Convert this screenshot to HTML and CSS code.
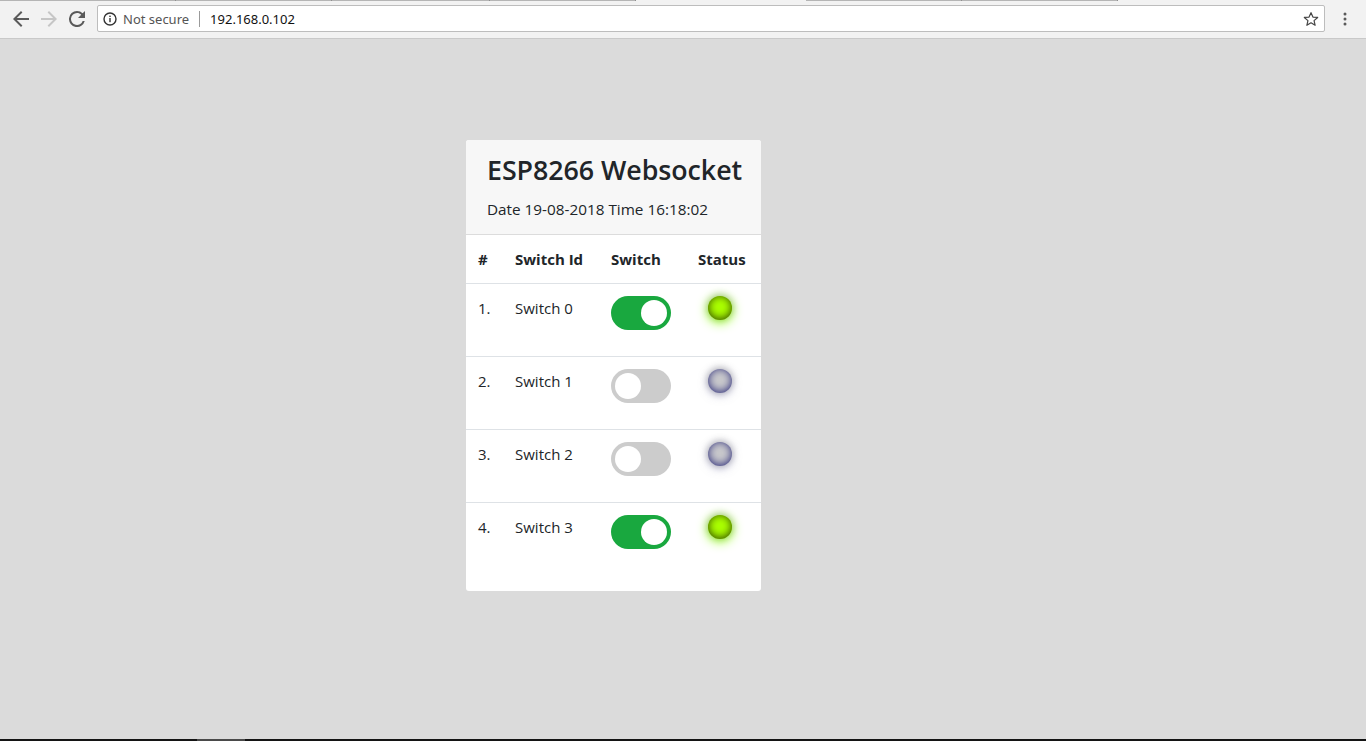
FILE: index.html
```html
<!DOCTYPE html>
<html>
<head>
<meta charset="utf-8">
<title>ESP8266 Websocket</title>
<link rel="stylesheet" href="styles.css">
</head>
<body>
<div class="window">
  <div class="chrome">
    <div class="tabstrip">
      <span class="tabline t1"></span><span class="tabline t2"></span><span class="tabline t3"></span><span class="tabline t4"></span>
      <span class="tabgap"></span>
      <span class="tabline t5"></span><span class="tabline t6"></span>
    </div>
    <div class="toolbar">
      <span class="navbtn">
        <svg width="16" height="16" viewBox="0 0 16 16"><path d="M16 7H3.83l5.59-5.59L8 0 0 8l8 8 1.41-1.41L3.83 9H16z" fill="#5a5a5a"/></svg>
      </span>
      <span class="navbtn">
        <svg width="16" height="16" viewBox="0 0 16 16"><path d="M0 7h12.17L6.58 1.41 8 0l8 8-8 8-1.41-1.41L12.17 9H0z" fill="#c6c6c6"/></svg>
      </span>
      <span class="navbtn">
        <svg width="16" height="16" viewBox="0 0 16 16"><path d="M13.65 2.35A7.95 7.95 0 0 0 8 0a8 8 0 1 0 7.74 10h-2.08A6 6 0 1 1 8 2c1.66 0 3.14.69 4.22 1.78L9 7h7V0l-2.35 2.35z" fill="#5a5a5a"/></svg>
      </span>
      <div class="omnibox">
        <svg class="info" width="14" height="14" viewBox="0 0 14 14"><circle cx="7" cy="7" r="6" fill="none" stroke="#333" stroke-width="1.4"/><rect x="6.3" y="6" width="1.4" height="4.2" fill="#333"/><rect x="6.3" y="3.6" width="1.4" height="1.4" fill="#333"/></svg>
        <span class="notsecure">Not secure</span>
        <span class="sep"></span>
        <span class="url">192.168.0.102</span>
        <span class="grow"></span>
        <svg class="star" width="16" height="16" viewBox="0 0 24 24"><path d="M12 2.5l2.9 6.6 7.1.6-5.4 4.7 1.6 7-6.2-3.7-6.2 3.7 1.6-7L2 9.7l7.1-.6z" fill="none" stroke="#444" stroke-width="1.8" stroke-linejoin="round"/></svg>
      </div>
      <span class="menu">
        <svg width="4" height="16" viewBox="0 0 4 16"><circle cx="2" cy="3" r="1.5" fill="#5a5a5a"/><circle cx="2" cy="8" r="1.5" fill="#5a5a5a"/><circle cx="2" cy="13" r="1.5" fill="#5a5a5a"/></svg>
      </span>
    </div>
  </div>
  <div class="viewport">
    <div class="card">
      <div class="card-header">
        <h3 class="title">ESP8266 Websocket</h3>
        <p class="datetime">Date 19-08-2018 Time 16:18:02</p>
      </div>
      <table class="table">
        <thead>
          <tr><th class="c1">#</th><th class="c2">Switch Id</th><th class="c3">Switch</th><th class="c4">Status</th></tr>
        </thead>
        <tbody>
          <tr><td>1.</td><td>Switch 0</td><td><span class="toggle on"><span class="knob"></span></span></td><td><span class="led led-on"></span></td></tr>
          <tr><td>2.</td><td>Switch 1</td><td><span class="toggle"><span class="knob"></span></span></td><td><span class="led led-off"></span></td></tr>
          <tr><td>3.</td><td>Switch 2</td><td><span class="toggle"><span class="knob"></span></span></td><td><span class="led led-off"></span></td></tr>
          <tr><td>4.</td><td>Switch 3</td><td><span class="toggle on"><span class="knob"></span></span></td><td><span class="led led-on"></span></td></tr>
        </tbody>
      </table>
    </div>
  </div>
  <div class="taskbar"><span class="taskseg"></span></div>
</div>
</body>
</html>
```

FILE: styles.css
```css
html, body {
  margin: 0;
  padding: 0;
  height: 100%;
}
body {
  font-family: "Open Sans", "Noto Sans", sans-serif;
  color: #212529;
  background: #dbdbdb;
}
.window {
  display: flex;
  flex-direction: column;
  height: 741px;
  overflow: hidden;
}
.chrome {
  height: 38px;
  background: #f2f2f2;
  border-bottom: 1px solid #c9c9c9;
  display: flex;
  flex-direction: column;
  flex: none;
}
.tabstrip {
  height: 2px;
  display: flex;
  flex: none;
}
.tabline {
  height: 1px;
  background: #b5b5b5;
  border-right: 1px solid #8e8e8e;
}
.t1 { width: 175px; }
.t2 { width: 155px; }
.t3 { width: 157px; }
.t4 { width: 145px; }
.tabgap { width: 170px; }
.t5 { width: 155px; }
.t6 { width: 155px; }
.toolbar {
  flex: 1;
  display: flex;
  align-items: center;
  padding: 0 0 0 12px;
  margin-top: 2px;
  margin-bottom: 5px;
}
.navbtn {
  width: 28px;
  height: 24px;
  display: flex;
  align-items: center;
  justify-content: flex-start;
  flex: none;
}
.navbtn:first-child {
  padding-left: 1px;
}
.omnibox {
  width: 1228px;
  height: 27px;
  box-sizing: border-box;
  flex: none;
  background: #fff;
  border: 1px solid #bdbdbd;
  border-radius: 2px;
  display: flex;
  align-items: center;
  padding: 0 5px 0 5px;
  font-family: "Noto Sans", "Open Sans", sans-serif;
  font-size: 13px;
}
.info { flex: none; }
.notsecure {
  margin-left: 6px;
  color: #555;
}
.sep {
  width: 1px;
  height: 16px;
  background: #9a9a9a;
  margin: 0 10px 0 10px;
}
.url {
  color: #111;
}
.grow { flex: 1; }
.star { flex: none; }
.menu {
  margin-left: 18px;
  display: flex;
  align-items: center;
}
.viewport {
  flex: 1;
  background: #dbdbdb;
  padding-top: 101px;
  padding-left: 466px;
}
.taskbar {
  height: 2px;
  background: #141414;
  flex: none;
  padding-left: 197px;
}
.taskseg {
  display: block;
  width: 48px;
  height: 2px;
  background: #4a4a4a;
}
.card {
  width: 295px;
  background: #fff;
  border-radius: 3px;
  overflow: hidden;
}
.card-header {
  background: #f7f7f7;
  border-bottom: 1px solid #dcdcdc;
  padding: 13px 10px 13px 21px;
}
.title {
  margin: 0;
  font-size: 26.8px;
  font-weight: 600;
  line-height: 34px;
  letter-spacing: -0.05px;
  white-space: nowrap;
}
.datetime {
  margin: 10px 0 0 0;
  font-size: 15.3px;
  line-height: 24px;
}
.table {
  width: 100%;
  border-collapse: collapse;
  margin-bottom: 16px;
  font-size: 15px;
}
.table th {
  text-align: left;
  font-weight: 700;
  padding: 12px 12px;
  line-height: 24px;
  border-bottom: 1px solid #dee2e6;
}
.c1 { width: 13px; }
.c2 { width: 72px; }
.c3 { width: 63px; }
.table td {
  padding: 12px 12px;
  line-height: 24px;
  height: 48px;
  vertical-align: top;
  border-top: 1px solid #dee2e6;
}
.table tbody tr:first-child td {
  border-top: none;
}
.toggle {
  display: block;
  position: relative;
  width: 60px;
  height: 34px;
  border-radius: 17px;
  background: #cccccc;
}
.toggle.on {
  background: #19a83f;
}
.knob {
  position: absolute;
  left: 4px;
  top: 4px;
  width: 26px;
  height: 26px;
  border-radius: 50%;
  background: #fff;
}
.toggle.on .knob {
  left: 30px;
}
.led {
  display: block;
  width: 24px;
  height: 24px;
  margin-left: 10px;
  border-radius: 50%;
}
.led-on {
  background: #abff00;
  box-shadow: rgba(0,0,0,0.2) 0 -1px 7px 1px, inset #304701 0 -1px 9px, #89ff00 0 2px 12px;
}
.led-off {
  background: #c9c9cc;
  box-shadow: rgba(0,0,0,0.2) 0 -1px 7px 1px, inset #2b2b7a 0 -1px 9px, rgba(120,120,170,0.5) 0 2px 10px;
}
```
